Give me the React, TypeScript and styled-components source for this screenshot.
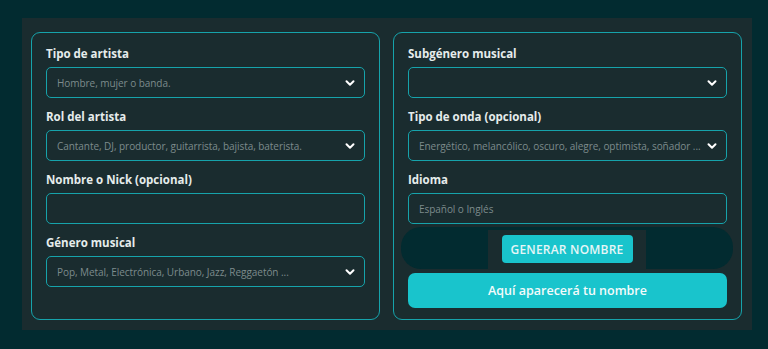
import styled, { createGlobalStyle } from 'styled-components';

const GlobalStyle = createGlobalStyle`
	html, body {
		margin: 0;
		background: #022b30;
		font-family: 'Open Sans', 'Noto Sans', sans-serif;
	}
	* {
		box-sizing: border-box;
	}
`;

interface FieldProps {
	label: string;
	placeholder?: string;
	select?: boolean;
}

const Chevron = () => (
	<svg width="12" height="12" viewBox="0 0 12 12" fill="none">
		<path d="M2.5 4.2 6 7.7 9.5 4.2" stroke="#ffffff" strokeWidth="2" strokeLinecap="round" strokeLinejoin="round" />
	</svg>
);

const Field = ({ label, placeholder = '', select = false }: FieldProps) => {
	return (
		<FieldWrap>
			<Label>{label}</Label>
			<InputBox>
				<Placeholder>{placeholder}</Placeholder>
				{select && <Chevron />}
			</InputBox>
		</FieldWrap>
	);
};

export default function App() {
	return (
		<>
			<GlobalStyle />
			<Page>
				<Panel>
					<Card>
						<Field label="Tipo de artista" placeholder="Hombre, mujer o banda." select />
						<Field
							label="Rol del artista"
							placeholder="Cantante, DJ, productor, guitarrista, bajista, baterista."
							select
						/>
						<Field label="Nombre o Nick (opcional)" />
						<Field
							label="Género musical"
							placeholder="Pop, Metal, Electrónica, Urbano, Jazz, Reggaetón ..."
							select
						/>
					</Card>
					<Card>
						<Field label="Subgénero musical" select />
						<Field
							label="Tipo de onda (opcional)"
							placeholder="Energético, melancólico, oscuro, alegre, optimista, soñador ..."
							select
						/>
						<Field label="Idioma" placeholder="Español o Inglés" />
						<ButtonBand>
							<ButtonSlot>
								<GenerateButton>GENERAR NOMBRE</GenerateButton>
							</ButtonSlot>
						</ButtonBand>
						<Result>Aquí aparecerá tu nombre</Result>
					</Card>
				</Panel>
			</Page>
		</>
	);
}

const Page = styled.div`
	width: 768px;
	height: 349px;
	padding: 18px 16px 0 22px;
`;

const Panel = styled.div`
	width: 730px;
	height: 312px;
	background: #1a2c2f;
	padding: 14px 10px 0 9px;
	display: flex;
	gap: 13px;
`;

const Card = styled.div`
	width: 349px;
	height: 288px;
	border: 1.5px solid #16a3ab;
	border-radius: 9px;
	padding: 13px 14px 0 14px;
	display: flex;
	flex-direction: column;
`;

const FieldWrap = styled.div`
	display: flex;
	flex-direction: column;
	margin-bottom: 11px;
`;

const Label = styled.label`
	color: #e6ecec;
	font-size: 11.5px;
	font-weight: 700;
	line-height: 16px;
	margin-bottom: 5px;
`;

const InputBox = styled.div`
	height: 31px;
	border: 1.5px solid #16a3ab;
	border-radius: 5px;
	padding: 0 8px 0 10px;
	display: flex;
	align-items: center;
	justify-content: space-between;
	gap: 3px;

	svg {
		flex-shrink: 0;
	}
`;

const Placeholder = styled.span`
	color: #7d8b8c;
	font-size: 10px;
	letter-spacing: -0.05px;
	white-space: nowrap;
	min-width: 0;
`;

const ButtonBand = styled.div`
	margin: -8px -6px 0 -7px;
	height: 42px;
	background: #022b30;
	border-radius: 20px;
	display: flex;
	justify-content: center;
	align-items: flex-end;
`;

const ButtonSlot = styled.div`
	width: 158px;
	height: 39px;
	background: #1a2c2f;
	display: flex;
	justify-content: center;
	padding-top: 5px;
`;

const GenerateButton = styled.button`
	width: 131px;
	height: 28px;
	border: none;
	border-radius: 4px;
	background: #19c4cc;
	color: #e6f6f7;
	font-family: 'Open Sans', sans-serif;
	font-size: 12px;
	font-weight: 600;
	letter-spacing: 0.2px;
	padding: 0;
`;

const Result = styled.div`
	margin-top: 4px;
	height: 35px;
	background: #19c4cc;
	border-radius: 7px;
	color: #f4fbfb;
	font-size: 12.5px;
	font-weight: 600;
	display: flex;
	align-items: center;
	justify-content: center;
`;
